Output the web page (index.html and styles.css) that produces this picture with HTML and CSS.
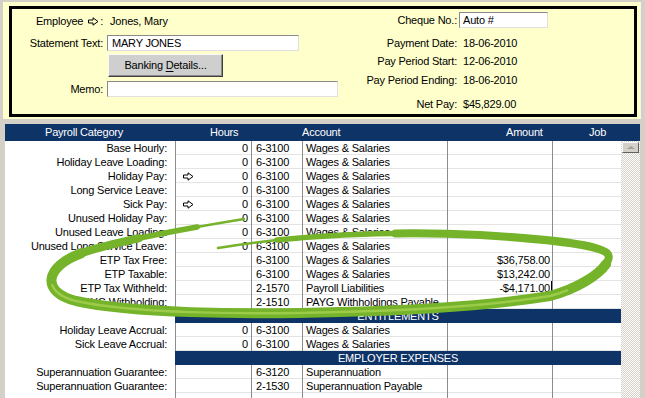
FILE: index.html
```html
<!DOCTYPE html>
<html>
<head>
<meta charset="utf-8">
<link rel="stylesheet" href="styles.css">
</head>
<body>
<div class="screen">
  <div class="panel">
    <div class="panel-inner">
      <div class="form-left">
        <div class="frow r-emp"><span class="lbl">Employee <svg class="arr" width="11" height="9" viewBox="0 0 11 9"><path d="M0.5 3 H5 V0.8 L10 4.5 L5 8.2 V6 H0.5 Z" fill="none" stroke="#000" stroke-width="1"/></svg>:</span><span class="val">Jones, Mary</span></div>
        <div class="frow r-stmt"><span class="lbl">Statement Text:</span><span class="input w-stmt">MARY JONES</span></div>
        <div class="frow r-btn"><span class="lbl"></span><span class="btn">Banking <u>D</u>etails...</span></div>
        <div class="frow r-memo"><span class="lbl">Memo:</span><span class="input w-memo"></span></div>
      </div>
      <div class="form-right">
        <div class="frow r-chq"><span class="rlbl">Cheque No.:</span><span class="input w-chq">Auto #</span></div>
        <div class="frow r-pay"><span class="rlbl">Payment Date:</span><span class="rval">18-06-2010</span></div>
        <div class="frow r-start"><span class="rlbl">Pay Period Start:</span><span class="rval">12-06-2010</span></div>
        <div class="frow r-end"><span class="rlbl">Pay Period Ending:</span><span class="rval">18-06-2010</span></div>
        <div class="frow r-net"><span class="rlbl">Net Pay:</span><span class="rval">$45,829.00</span></div>
      </div>
    </div>
  </div>

  <div class="grid">
    <div class="ghead">
      <div class="h h-cat">Payroll Category</div>
      <div class="h h-hrs">Hours</div>
      <div class="h h-code"></div>
      <div class="h h-acc">Account</div>
      <div class="h h-amt">Amount</div>
      <div class="h h-job">Job</div>
      <div class="h h-sb"></div>
    </div>
    <div class="gbody-wrap">
      <div class="gbody">
        <div class="row"><div class="c cat">Base Hourly:</div><div class="c hrs"><span></span><span>0</span></div><div class="c code">6-3100</div><div class="c acc">Wages &amp; Salaries</div><div class="c amt"></div><div class="c job"></div></div>
        <div class="row"><div class="c cat">Holiday Leave Loading:</div><div class="c hrs"><span></span><span>0</span></div><div class="c code">6-3100</div><div class="c acc">Wages &amp; Salaries</div><div class="c amt"></div><div class="c job"></div></div>
        <div class="row"><div class="c cat">Holiday Pay:</div><div class="c hrs"><svg class="arr" width="11" height="9" viewBox="0 0 11 9"><path d="M0.5 3 H5 V0.8 L10 4.5 L5 8.2 V6 H0.5 Z" fill="none" stroke="#000" stroke-width="1"/></svg><span>0</span></div><div class="c code">6-3100</div><div class="c acc">Wages &amp; Salaries</div><div class="c amt"></div><div class="c job"></div></div>
        <div class="row"><div class="c cat">Long Service Leave:</div><div class="c hrs"><span></span><span>0</span></div><div class="c code">6-3100</div><div class="c acc">Wages &amp; Salaries</div><div class="c amt"></div><div class="c job"></div></div>
        <div class="row"><div class="c cat">Sick Pay:</div><div class="c hrs"><svg class="arr" width="11" height="9" viewBox="0 0 11 9"><path d="M0.5 3 H5 V0.8 L10 4.5 L5 8.2 V6 H0.5 Z" fill="none" stroke="#000" stroke-width="1"/></svg><span>0</span></div><div class="c code">6-3100</div><div class="c acc">Wages &amp; Salaries</div><div class="c amt"></div><div class="c job"></div></div>
        <div class="row"><div class="c cat">Unused Holiday Pay:</div><div class="c hrs"><span></span><span>0</span></div><div class="c code">6-3100</div><div class="c acc">Wages &amp; Salaries</div><div class="c amt"></div><div class="c job"></div></div>
        <div class="row"><div class="c cat">Unused Leave Loading:</div><div class="c hrs"><span></span><span>0</span></div><div class="c code">6-3100</div><div class="c acc">Wages &amp; Salaries</div><div class="c amt"></div><div class="c job"></div></div>
        <div class="row"><div class="c cat">Unused Long Service Leave:</div><div class="c hrs"><span></span><span>0</span></div><div class="c code">6-3100</div><div class="c acc">Wages &amp; Salaries</div><div class="c amt"></div><div class="c job"></div></div>
        <div class="row"><div class="c cat">ETP Tax Free:</div><div class="c hrs"></div><div class="c code">6-3100</div><div class="c acc">Wages &amp; Salaries</div><div class="c amt">$36,758.00</div><div class="c job"></div></div>
        <div class="row"><div class="c cat">ETP Taxable:</div><div class="c hrs"></div><div class="c code">6-3100</div><div class="c acc">Wages &amp; Salaries</div><div class="c amt">$13,242.00</div><div class="c job"></div></div>
        <div class="row"><div class="c cat">ETP Tax Withheld:</div><div class="c hrs"></div><div class="c code">2-1570</div><div class="c acc">Payroll Liabilities</div><div class="c amt amt-edit">-$4,171.00<span class="caret"></span></div><div class="c job"></div></div>
        <div class="row"><div class="c cat">PAYG Withholding:</div><div class="c hrs"></div><div class="c code">2-1510</div><div class="c acc">PAYG Withholdings Payable</div><div class="c amt"></div><div class="c job"></div></div>
        <div class="row section"><div class="c cat"></div><div class="c band">ENTITLEMENTS</div></div>
        <div class="row"><div class="c cat">Holiday Leave Accrual:</div><div class="c hrs"><span></span><span>0</span></div><div class="c code">6-3100</div><div class="c acc">Wages &amp; Salaries</div><div class="c amt"></div><div class="c job"></div></div>
        <div class="row"><div class="c cat">Sick Leave Accrual:</div><div class="c hrs"><span></span><span>0</span></div><div class="c code">6-3100</div><div class="c acc">Wages &amp; Salaries</div><div class="c amt"></div><div class="c job"></div></div>
        <div class="row section"><div class="c cat"></div><div class="c band">EMPLOYER EXPENSES</div></div>
        <div class="row"><div class="c cat">Superannuation Guarantee:</div><div class="c hrs"></div><div class="c code">6-3120</div><div class="c acc">Superannuation</div><div class="c amt"></div><div class="c job"></div></div>
        <div class="row"><div class="c cat">Superannuation Guarantee:</div><div class="c hrs"></div><div class="c code">2-1530</div><div class="c acc">Superannuation Payable</div><div class="c amt"></div><div class="c job"></div></div>
        <div class="row"><div class="c cat"></div><div class="c hrs"></div><div class="c code"></div><div class="c acc"></div><div class="c amt"></div><div class="c job"></div></div>
      </div>
      <div class="scroll"><div class="sbtn"><span class="tri"></span></div></div>
    </div>
  </div>

  <svg class="swoosh" width="645" height="398" viewBox="0 0 645 398">
    <defs>
      <path id="sw" d="M244,219 C195,227 120,240 82,253 C45,266 40,292 76,301 C130,313 240,315 340,312 C420,310 500,304 550,296 C588,286 616,262 607,253 C598,245 560,240 480,235 C400,231 300,234 218,248"/>
    </defs>
    <use href="#sw" fill="none" stroke="#74b32a" stroke-width="2.5" stroke-linecap="round"/>
    <path d="M244,219 C195,227 120,240 82,253 C45,266 40,292 76,301 C130,313 240,315 340,312 C420,310 500,304 550,296 C588,286 616,262 607,253 C598,245 560,240 480,235 C400,231 300,234 218,248" pathLength="100" fill="none" stroke="#74b32a" stroke-width="5.5" stroke-linecap="round" stroke-dasharray="91 200" stroke-dashoffset="-4"/>
    <path d="M244,219 C195,227 120,240 82,253 C45,266 40,292 76,301 C130,313 240,315 340,312 C420,310 500,304 550,296 C588,286 616,262 607,253 C598,245 560,240 480,235 C400,231 300,234 218,248" pathLength="100" fill="none" stroke="#74b32a" stroke-width="8" stroke-linecap="round" stroke-dasharray="76 200" stroke-dashoffset="-9"/>
    <path d="M244,219 C195,227 120,240 82,253 C45,266 40,292 76,301 C130,313 240,315 340,312 C420,310 500,304 550,296 C588,286 616,262 607,253 C598,245 560,240 480,235 C400,231 300,234 218,248" pathLength="100" fill="none" stroke="#74b32a" stroke-width="10" stroke-linecap="round" stroke-dasharray="52 200" stroke-dashoffset="-14"/>
    <path d="M244,219 C195,227 120,240 82,253 C45,266 40,292 76,301 C130,313 240,315 340,312 C420,310 500,304 550,296 C588,286 616,262 607,253 C598,245 560,240 480,235 C400,231 300,234 218,248" pathLength="100" fill="none" stroke="#a6d152" stroke-width="2.5" stroke-linecap="round" stroke-dasharray="44 200" stroke-dashoffset="-18" opacity="0.8"/>
  </svg>
</div>
</body>
</html>
```

FILE: styles.css
```css
html, body {
  margin: 0;
  padding: 0;
}
body {
  background: #d4d0c8;
  font-family: "Liberation Sans", Arial, sans-serif;
  font-size: 11px;
  letter-spacing: -0.2px;
  color: #000;
}
.screen {
  position: relative;
  width: 645px;
  height: 398px;
  overflow: hidden;
  background: #d4d0c8;
}

/* ---------- top panel ---------- */
.panel {
  margin: 2px 5px 0 3px;
  height: 117px;
  box-sizing: border-box;
  padding: 4px 3px 2px 6px;
  background: #ffffcc;
  box-shadow: 1px 0 0 #f4f4f4;
}
.panel-inner {
  height: 100%;
  box-sizing: border-box;
  border: 3px solid #000;
  display: flex;
}
.form-left {
  width: 330px;
  display: flex;
  flex-direction: column;
}
.frow {
  display: flex;
  align-items: center;
  line-height: 14px;
}
.lbl {
  width: 91px;
  margin-right: 4px;
  text-align: right;
  white-space: nowrap;
}
.arr {
  vertical-align: -1px;
  margin: 0 1px 0 2px;
}
.val {
  padding-left: 3px;
}
.r-emp { margin-top: 5px; height: 14px; }
.r-stmt { margin-top: 7px; height: 16px; }
.r-btn { margin-top: 3px; height: 23px; }
.r-memo { margin-top: 4px; height: 16px; }

.input {
  height: 16px;
  box-sizing: border-box;
  background: #fff;
  border: 1px solid;
  border-color: #8a8a8a #e0e0e0 #e0e0e0 #8a8a8a;
  padding-left: 4px;
  line-height: 14px;
  white-space: nowrap;
}
.w-stmt { width: 192px; }
.w-memo { width: 231px; }
.w-chq { width: 89px; padding-left: 3px; }

.btn {
  width: 115px;
  height: 23px;
  margin-left: 1px;
  box-sizing: border-box;
  background: #cfcfcf;
  border: 1px solid;
  border-color: #f8f8f8 #404040 #404040 #f8f8f8;
  box-shadow: inset -1px -1px 0 #8a8a8a;
  text-align: center;
  line-height: 20px;
}
.btn u { text-decoration-thickness: 1px; text-underline-offset: 2px; }

.form-right {
  display: flex;
  flex-direction: column;
}
.rlbl {
  width: 115px;
  margin-right: 2px;
  text-align: right;
  white-space: nowrap;
}
.rval {
  padding-left: 4px;
  white-space: nowrap;
}
.r-chq { margin-top: 3px; height: 16px; }
.r-pay { margin-top: 8px; height: 14px; }
.r-start { margin-top: 4px; height: 14px; }
.r-end { margin-top: 5px; height: 14px; }
.r-net { margin-top: 10px; height: 14px; }

/* ---------- grid ---------- */
.grid {
  margin: 5px 5px 0 5px;
}
.ghead {
  display: flex;
  height: 17px;
  background: #0e3366;
  color: #fff;
  line-height: 17px;
}
.h { box-sizing: border-box; white-space: nowrap; }
.h-cat { width: 170px; padding-left: 40px; }
.h-hrs { width: 76px; padding-left: 35px; }
.h-code { width: 51px; }
.h-acc { width: 145px; }
.h-amt { width: 105px; padding-left: 59px; }
.h-job { width: 69px; padding-left: 37px; }
.h-sb { width: 19px; }

.gbody-wrap {
  display: flex;
  height: 257px;
  overflow: hidden;
}
.gbody {
  width: 616px;
  background: #fff;
}
.row {
  display: grid;
  grid-template-columns: 170px 76px 51px 145px 105px 69px;
  height: 14px;
  line-height: 14px;
}
.c {
  box-sizing: border-box;
  height: 14px;
  white-space: nowrap;
  overflow: hidden;
  box-shadow: inset 0 -1px 0 #e4e4e4;
}
.cat {
  text-align: right;
  padding-right: 8px;
  box-shadow: none;
}
.hrs {
  border-left: 1px solid #8c8c8c;
  display: flex;
  justify-content: space-between;
  align-items: center;
  padding: 0 3px 0 7px;
}
.hrs .arr { margin: 0; }
.code {
  border-left: 1px solid #8c8c8c;
  padding-left: 4px;
}
.acc {
  border-left: 1px solid #8c8c8c;
  padding-left: 3px;
}
.amt {
  border-left: 1px solid #8c8c8c;
  text-align: right;
  padding-right: 2px;
}
.amt-edit { padding-right: 0; }
.caret {
  display: inline-block;
  width: 1px;
  height: 13px;
  margin-left: 1px;
  background: #000;
  vertical-align: top;
}
.job {
  border-left: 1px solid #8c8c8c;
}
.section .band {
  grid-column: 2 / 7;
  background: #0e3366;
  color: #fff;
  text-align: center;
  box-shadow: none;
}

/* ---------- scrollbar ---------- */
.scroll {
  width: 19px;
  background-color: #fff;
  background-image: repeating-conic-gradient(#d4d0c8 0 25%, #ffffff 0 50%);
  background-size: 2px 2px;
}
.sbtn {
  width: 17px;
  height: 11px;
  margin: 1px 0 0 1px;
  box-sizing: border-box;
  background: #d4d0c8;
  border: 1px solid;
  border-color: #f8f8f8 #606060 #606060 #f8f8f8;
  display: flex;
  align-items: center;
  justify-content: center;
}
.tri {
  width: 0;
  height: 0;
  border-left: 4px solid transparent;
  border-right: 4px solid transparent;
  border-bottom: 3px solid #a0a0a0;
}

/* ---------- highlight swoosh overlay ---------- */
.swoosh {
  position: absolute;
  left: 0;
  top: 0;
  pointer-events: none;
}
```
